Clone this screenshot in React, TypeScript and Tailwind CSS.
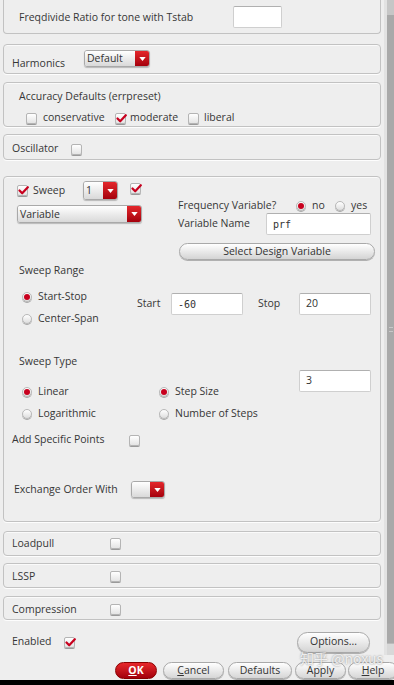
import React from "react";

// Harmonic Balance form (pane of a Cadence-like options dialog)

function Check({ checked = false }: { checked?: boolean }) {
	return (
		<span className="relative inline-block w-[11px] h-[11px] shrink-0 rounded-[2px] border border-[#b4b4b4] bg-gradient-to-b from-white to-[#e4e4e4] shadow-[0_1px_0_#9a9a9a]">
			{checked && (
				<svg viewBox="0 0 11 11" className="absolute left-[0px] top-[-1px] w-[11px] h-[11px]">
					<path d="M1.5 5.5 L4.2 8.3 L9.8 2.2" fill="none" stroke="#c8001e" strokeWidth="2.2" strokeLinecap="round" strokeLinejoin="round" />
				</svg>
			)}
		</span>
	);
}

function Radio({ checked = false }: { checked?: boolean }) {
	return (
		<span className="relative inline-flex items-center justify-center w-[10px] h-[10px] shrink-0 rounded-full border border-[#b8b8b8] bg-gradient-to-b from-white to-[#dedede] shadow-[0_1px_0_#a8a8a8]">
			{checked && <span className="w-[6px] h-[6px] rounded-full bg-[#c8001e]" />}
		</span>
	);
}

function Dropdown({ label, width, height = "h-[17px]" }: { label: string; width: string; height?: string }) {
	return (
		<div className={`flex ${width} ${height} rounded-[3px] border border-[#a9a9a9] overflow-hidden shadow-[0_1px_1px_#b8b8b8]`}>
			<div className="flex-1 flex items-center pl-[2px] bg-gradient-to-b from-white to-[#d9d9d9] text-[#333] leading-none">{label}</div>
			<div className="w-[14px] flex items-center justify-center bg-gradient-to-b from-[#e4262b] to-[#a5000c]">
				<svg viewBox="0 0 8 5" className="w-[7px] h-[4px]">
					<path d="M0 0 H8 L4 5 Z" fill="#fff" />
				</svg>
			</div>
		</div>
	);
}

function Field({ value = "", width, mono = false }: { value?: string; width: string; mono?: boolean }) {
	return (
		<div
			className={`${width} h-[22px] flex items-center pl-[6px] bg-white border border-[#cfcfcf] border-t-[#b0b0b0] rounded-[2px] text-[#333] ${
				mono ? "font-['DejaVu_Sans_Mono',monospace] text-[10px]" : ""
			}`}
		>
			{value}
		</div>
	);
}

function Panel({ className = "", children }: { className?: string; children?: React.ReactNode }) {
	return (
		<div className={`ml-[3px] w-[378px] border border-[#c2c2c2] rounded-[4px] shadow-[0_1px_0_#fdfdfd,inset_0_1px_0_#fafafa] ${className}`}>
			{children}
		</div>
	);
}

function PillButton({ label, width, red = false }: { label: React.ReactNode; width: string; red?: boolean }) {
	return (
		<div
			className={`${width} h-[17px] flex items-center justify-center rounded-full border leading-none ${
				red
					? "border-[#8a0000] bg-gradient-to-b from-[#e8262b] to-[#a3000c] text-white font-bold"
					: "border-[#a9a9a9] bg-gradient-to-b from-white to-[#d6d6d6] text-[#333] shadow-[0_1px_0_#b0b0b0]"
			}`}
		>
			{label}
		</div>
	);
}

export default function App() {
	return (
		<div className="relative w-[394px] h-[685px] overflow-hidden bg-[#eeeeee] text-[10.5px] text-[#363636] font-['Open_Sans',sans-serif]">
			<div className="flex h-[655px]">
				<div className="w-[384px]">
					{/* Freqdivide */}
					<div className="ml-[3px] w-[378px] h-[34px] border border-t-0 border-[#c2c2c2] rounded-b-[4px] flex items-start">
						<span className="ml-[15px] mt-[10px] w-[214px] leading-[14px]">Freqdivide Ratio for tone with Tstab</span>
						<div className="mt-[6px]">
							<Field width="w-[49px]" />
						</div>
					</div>

					{/* Harmonics */}
					<Panel className="mt-[10px] h-[30px] flex items-start">
						<span className="ml-[8px] mt-[11px] w-[72px] leading-[14px]">Harmonics</span>
						<div className="mt-[5px]">
							<Dropdown label="Default" width="w-[66px]" />
						</div>
					</Panel>

					{/* Accuracy */}
					<Panel className="mt-[8px] h-[45px] pt-[6px]">
						<div className="ml-[15px] leading-[14px]">Accuracy Defaults (errpreset)</div>
						<div className="ml-[22px] mt-[9px] flex items-center h-[12px]">
							<Check />
							<span className="ml-[6px] w-[72px]">conservative</span>
							<Check checked />
							<span className="ml-[4px] w-[58px]">moderate</span>
							<Check />
							<span className="ml-[5px]">liberal</span>
						</div>
					</Panel>

					{/* Oscillator */}
					<Panel className="mt-[7px] h-[26px] pt-[4px] flex items-center">
						<span className="ml-[8px] w-[59px]">Oscillator</span>
						<Check />
					</Panel>

					{/* Sweep */}
					<Panel className="mt-[16px] h-[346px] pt-[4px]">
						<div className="flex">
							<div className="ml-[13px] w-[125px] flex flex-col gap-[5px]">
								<div className="h-[19px] flex items-center">
									<Check checked />
									<span className="ml-[5px] w-[50px]">Sweep</span>
									<Dropdown label="1" width="w-[35px]" height="h-[19px]" />
									<span className="ml-[12px]">
										<Check checked />
									</span>
								</div>
								<Dropdown label="Variable" width="w-[125px]" height="h-[18px]" />
							</div>
							<div className="ml-[36px] pt-[17px]">
								<div className="h-[15px] flex items-center">
									<span className="w-[118px]">Frequency Variable?</span>
									<Radio checked />
									<span className="ml-[6px] w-[23px]">no</span>
									<Radio />
									<span className="ml-[6px]">yes</span>
								</div>
								<div className="h-[22px] flex items-center">
									<span className="w-[88px]">Variable Name</span>
									<Field value="prf" width="w-[105px]" mono />
								</div>
							</div>
						</div>

						<div className="ml-[175px] mt-[8px] w-[196px] h-[17px] flex items-center justify-center rounded-full border border-[#a9a9a9] bg-gradient-to-b from-white to-[#d4d4d4] shadow-[0_1px_0_#b0b0b0] text-[#333]">
							Select Design Variable
						</div>

						<div className="ml-[15px] mt-[3px] leading-[14px]">Sweep Range</div>

						<div className="mt-[12px] flex items-start">
							<div className="ml-[18px] mt-[1px] w-[115px] flex flex-col gap-[8px]">
								<div className="h-[14px] flex items-center">
									<Radio checked />
									<span className="ml-[6px]">Start-Stop</span>
								</div>
								<div className="h-[14px] flex items-center">
									<Radio />
									<span className="ml-[6px]">Center-Span</span>
								</div>
							</div>
							<div className="mt-[4px] flex items-center">
								<span className="w-[34px] -mt-[1px]">Start</span>
								<Field value="-60" width="w-[72px]" mono />
								<span className="ml-[15px] w-[41px]">Stop</span>
								<Field value="20" width="w-[72px]" />
							</div>
						</div>

						<div className="mt-[28px] flex items-start">
							<div className="ml-[15px] w-[280px]">
								<div className="leading-[14px]">Sweep Type</div>
								<div className="ml-[3px] mt-[17px] grid grid-cols-[137px_1fr] gap-y-[8px]">
									<div className="h-[14px] flex items-center">
										<Radio checked />
										<span className="ml-[6px]">Linear</span>
									</div>
									<div className="h-[14px] flex items-center">
										<Radio checked />
										<span className="ml-[6px]">Step Size</span>
									</div>
									<div className="h-[14px] flex items-center">
										<Radio />
										<span className="ml-[6px]">Logarithmic</span>
									</div>
									<div className="h-[14px] flex items-center">
										<Radio />
										<span className="ml-[6px]">Number of Steps</span>
									</div>
								</div>
							</div>
							<div className="mt-[16px]">
								<Field value="3" width="w-[72px]" />
							</div>
						</div>

						<div className="mt-[12px] h-[14px] flex items-center">
							<span className="ml-[8px] w-[117px]">Add Specific Points</span>
							<Check />
						</div>

						<div className="mt-[34px] h-[17px] flex items-center">
							<span className="ml-[10px] w-[117px]">Exchange Order With</span>
							<Dropdown label="" width="w-[34px]" />
						</div>
					</Panel>

					{/* Loadpull / LSSP / Compression */}
					<Panel className="mt-[9px] h-[25px] flex items-center">
						<span className="ml-[8px] w-[98px]">Loadpull</span>
						<Check />
					</Panel>
					<Panel className="mt-[7px] h-[25px] pt-[2px] flex items-center">
						<span className="ml-[8px] w-[98px]">LSSP</span>
						<Check />
					</Panel>
					<Panel className="mt-[8px] h-[24px] pt-[3px] flex items-center">
						<span className="ml-[8px] w-[98px]">Compression</span>
						<Check />
					</Panel>

					<div className="mt-[11px] h-[22px] flex items-center">
						<span className="ml-[12px] w-[52px]">Enabled</span>
						<Check checked />
						<div className="ml-auto mr-[14px] w-[73px] h-[21px] flex items-center justify-center rounded-full border border-[#a9a9a9] bg-gradient-to-b from-white to-[#d4d4d4] shadow-[0_1px_0_#b0b0b0] text-[#333]">
							Options...
						</div>
					</div>
				</div>

				{/* scrollbar */}
				<div className="w-[10px] flex flex-col border-l-[3px] border-[#e2e2e2] bg-[#b5b5b5]">
					<div className="h-[15px] bg-[#c6c6c6]" />
					<div className="flex-1 bg-[#a9a9a9] flex items-center justify-center">
						<div className="w-[4px] h-[5px] border-y border-[#c8c8c8]" />
					</div>
					<div className="h-[12px] bg-[#d8d8d8] border-t border-[#bbbbbb]" />
				</div>
			</div>

			{/* dialog buttons */}
			<div className="mt-[7px] h-[17px] flex items-center">
				<div className="ml-[115px]">
					<PillButton
						red
						width="w-[42px]"
						label={
							<span>
								<span className="underline">O</span>K
							</span>
						}
					/>
				</div>
				<div className="ml-[6px]">
					<PillButton
						width="w-[61px]"
						label={
							<span>
								<span className="underline">C</span>ancel
							</span>
						}
					/>
				</div>
				<div className="ml-[4px]">
					<PillButton width="w-[64px]" label="Defaults" />
				</div>
				<div className="ml-[3px]">
					<PillButton width="w-[51px]" label="Apply" />
				</div>
				<div className="ml-[2px]">
					<PillButton
						width="w-[50px]"
						label={
							<span>
								<span className="underline">H</span>elp
							</span>
						}
					/>
				</div>
			</div>
			<div className="mt-[1px] h-[5px] bg-black" />

			{/* watermark */}
			<div className="absolute left-[300px] top-[651px] text-[14px] leading-none text-white/80 [text-shadow:0_0_2px_#777] font-['Noto_Sans_CJK_SC',sans-serif]">
				知乎 @noxus
			</div>
		</div>
	);
}
